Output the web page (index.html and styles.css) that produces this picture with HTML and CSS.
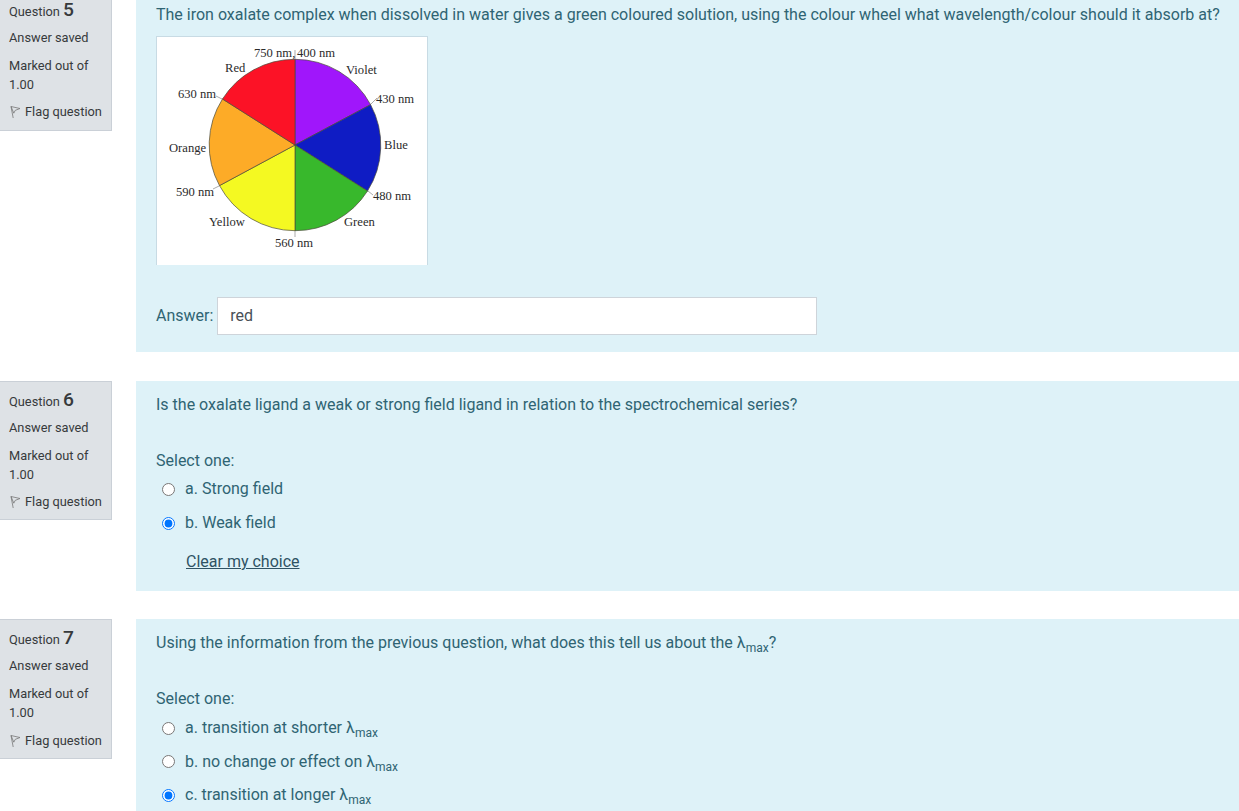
FILE: index.html
```html
<!DOCTYPE html>
<html>
<head>
  <title>Quiz attempt</title>
  <link rel="stylesheet" href="styles.css">
</head>
<body>
  <div class="page">

    <!-- Question 5 -->
    <div class="que que-5">
      <div class="info">
        <h3 class="qno">Question <span class="num">5</span></h3>
        <div class="state">Answer saved</div>
        <div class="grade">Marked out of 1.00</div>
        <div class="flag">
          <svg class="flag-icon" viewBox="0 0 12 14"><path d="M2 1.5 L11 3.5 L6.2 5.4 L4.8 8.2 Z M2 1.5 L4.2 13" /></svg>
          <span>Flag question</span>
        </div>
      </div>
      <div class="content">
        <div class="qtext">The iron oxalate complex when dissolved in water gives a green coloured solution, using the colour wheel what wavelength/colour should it absorb at?</div>
        <div class="wheel-box">
          <svg class="wheel" width="270" height="228" viewBox="1 1 270 228">
            <g stroke="#4a4a3a" stroke-width="0.7">
              <path d="M139 23.3 A85.7 85.7 0 0 1 214.6 68.7 L139 109 Z" fill="#a016fb" />
              <path d="M214.6 68.7 A85.7 85.7 0 0 1 211.5 155 L139 109 Z" fill="#0f1cc4" />
              <path d="M211.5 155 A85.7 85.7 0 0 1 139 194.7 L139 109 Z" fill="#38b82c" />
              <path d="M139 194.7 A85.7 85.7 0 0 1 63.5 149.6 L139 109 Z" fill="#f4f922" />
              <path d="M63.5 149.6 A85.7 85.7 0 0 1 66.5 63 L139 109 Z" fill="#fdab27" />
              <path d="M66.5 63 A85.7 85.7 0 0 1 139 23.3 L139 109 Z" fill="#fc1226" />
              <path fill="none" stroke="#888" d="M139 23 V14 M215 68 L221 62 M212 155 L217 159 M139 195 V201 M63 150 L57 153 M66 63 L60 60" />
            </g>
            <g class="wheel-text">
              <text x="98" y="21">750 nm,</text>
              <text x="141" y="21">400 nm</text>
              <text x="69" y="36">Red</text>
              <text x="190" y="38">Violet</text>
              <text x="22" y="62">630 nm</text>
              <text x="220" y="67">430 nm</text>
              <text x="13" y="116">Orange</text>
              <text x="228" y="113">Blue</text>
              <text x="20" y="160">590 nm</text>
              <text x="217" y="164">480 nm</text>
              <text x="53" y="190">Yellow</text>
              <text x="188" y="190">Green</text>
              <text x="119" y="211">560 nm</text>
            </g>
          </svg>
        </div>
        <div class="answer-row">
          <label for="q5answer">Answer:</label>
          <input class="answer-input" id="q5answer" type="text" value="red">
        </div>
      </div>
    </div>

    <!-- Question 6 -->
    <div class="que que-6">
      <div class="info">
        <h3 class="qno">Question <span class="num">6</span></h3>
        <div class="state">Answer saved</div>
        <div class="grade">Marked out of 1.00</div>
        <div class="flag">
          <svg class="flag-icon" viewBox="0 0 12 14"><path d="M2 1.5 L11 3.5 L6.2 5.4 L4.8 8.2 Z M2 1.5 L4.2 13" /></svg>
          <span>Flag question</span>
        </div>
      </div>
      <div class="content">
        <div class="qtext">Is the oxalate ligand a weak or strong field ligand in relation to the spectrochemical series?</div>
        <div class="prompt">Select one:</div>
        <label class="choice"><input type="radio" name="q6"><span>a. Strong field</span></label>
        <label class="choice"><input type="radio" name="q6" checked><span>b. Weak field</span></label>
        <a class="clear" href="#">Clear my choice</a>
      </div>
    </div>

    <!-- Question 7 -->
    <div class="que que-7">
      <div class="info">
        <h3 class="qno">Question <span class="num">7</span></h3>
        <div class="state">Answer saved</div>
        <div class="grade">Marked out of 1.00</div>
        <div class="flag">
          <svg class="flag-icon" viewBox="0 0 12 14"><path d="M2 1.5 L11 3.5 L6.2 5.4 L4.8 8.2 Z M2 1.5 L4.2 13" /></svg>
          <span>Flag question</span>
        </div>
      </div>
      <div class="content">
        <div class="qtext">Using the information from the previous question, what does this tell us about the λ<sub>max</sub>?</div>
        <div class="prompt">Select one:</div>
        <label class="choice"><input type="radio" name="q7"><span>a. transition at shorter λ<sub>max</sub></span></label>
        <label class="choice"><input type="radio" name="q7"><span>b. no change or effect on λ<sub>max</sub></span></label>
        <label class="choice"><input type="radio" name="q7" checked><span>c. transition at longer λ<sub>max</sub></span></label>
      </div>
    </div>

  </div>
</body>
</html>
```

FILE: styles.css
```css
* {
  box-sizing: border-box;
}
html, body {
  height: 811px;
  overflow: hidden;
}
body {
  margin: 0;
  background-color: #fff;
  color: #2f6473;
  font-family: Roboto, Arial, sans-serif;
  font-size: 16px;
  line-height: 24px;
}
.page {
  margin-top: -9px;
}
.que {
  display: flex;
  align-items: flex-start;
  margin-bottom: 29px;
}
.que-6 {
  margin-bottom: 28px;
}
.que-7 {
  margin-bottom: 0;
}
.info {
  flex: none;
  width: 112px;
  height: 139px;
  padding: 6px 0 0 9px;
  background-color: #dee2e6;
  border: 1px solid #cad0d7;
  border-left: 0;
  color: #373a3c;
  font-size: 12.8px;
  line-height: 19px;
}
.que-5 .info,
.que-7 .info {
  height: 140px;
}
.que-7 .grade {
  margin-bottom: 9px;
}
.qno {
  margin: 0 0 5px;
  font-size: 12.8px;
  font-weight: 400;
  line-height: 23px;
}
.num {
  font-size: 19.2px;
  font-weight: 500;
}
.state {
  margin-bottom: 9px;
  white-space: nowrap;
}
.grade {
  width: 90px;
  margin-bottom: 8px;
}
.flag {
  display: flex;
  align-items: center;
  gap: 4px;
  white-space: nowrap;
}
.flag-icon {
  flex: none;
  width: 12px;
  height: 14px;
  fill: none;
  stroke: #777;
  stroke-width: 0.8;
}
.content {
  flex: 1;
  min-width: 0;
  margin-left: 24px;
  padding: 12px 16px 17px 20px;
  background-color: #def2f8;
}
.que-7 .content {
  height: 201px;
  padding-bottom: 0;
}
.prompt {
  margin-top: 32px;
  margin-bottom: 4px;
}
.que-7 .prompt {
  margin-bottom: 5px;
}
.choice {
  display: flex;
  align-items: center;
  height: 24px;
  margin-bottom: 10px;
}
.que-7 .choice {
  margin-bottom: 9.5px;
}
.choice input {
  flex: none;
  width: 13px;
  height: 13px;
  margin: 0 10px 0 6px;
}
sub {
  font-size: 12px;
  line-height: 0;
  vertical-align: -4px;
}
.clear {
  display: block;
  margin: 15px 0 0 30px;
  color: #2f5364;
  text-decoration: underline;
}
.wheel-box {
  width: 272px;
  height: 229px;
  margin-top: 9px;
  background-color: #fff;
  border: 1px solid #c8dbe4;
  border-bottom: 0;
}
.wheel {
  display: block;
}
.wheel-text text {
  font-family: "Liberation Serif", serif;
  font-size: 12.6px;
  fill: #2b2b2b;
}
.answer-row {
  display: flex;
  align-items: center;
  gap: 4px;
  margin-top: 32px;
}
.answer-input {
  width: 600px;
  height: 38px;
  padding: 5px 12px 7px;
  background-color: #fff;
  border: 1px solid #ced4da;
  color: #495057;
  font-family: Roboto, Arial, sans-serif;
  font-size: 16px;
}
```
